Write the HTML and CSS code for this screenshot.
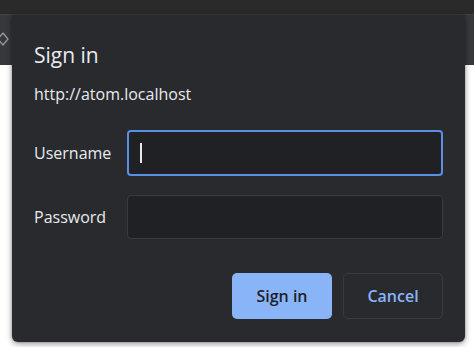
FILE: index.html
```html
<!DOCTYPE html>
<html>
<head>
<meta charset="utf-8">
<link rel="stylesheet" href="styles.css">
</head>
<body>
<div class="page">
  <div class="topbar"></div>
  <div class="toolbar">
    <svg class="chev" width="10" height="16" viewBox="0 0 10 16"><polyline points="3,2 8,8 3,14 -2,8 3,2" fill="none" stroke="#9a9b9e" stroke-width="1.3"/></svg>
  </div>
  <div class="content"></div>

  <div class="dialog">
    <h1 class="title">Sign in</h1>
    <div class="origin">http://atom.localhost</div>
    <div class="form">
      <label class="label">Username</label>
      <div class="field focused"><span class="caret"></span></div>
      <label class="label">Password</label>
      <div class="field"></div>
    </div>
    <div class="actions">
      <button class="btn primary">Sign in</button>
      <button class="btn secondary">Cancel</button>
    </div>
  </div>
</div>
</body>
</html>
```
FILE: styles.css
```css
html, body {
  margin: 0;
  padding: 0;
  background: #ffffff;
}
body {
  width: 474px;
  height: 347px;
  overflow: hidden;
  font-family: "Open Sans", "Noto Sans", sans-serif;
}
.page {
  position: relative;
  width: 474px;
  height: 347px;
}
.topbar {
  height: 14px;
  background: #2a2a2b;
  border-bottom: 1px solid #414144;
}
.toolbar {
  height: 50px;
  background: #37383b;
  display: flex;
  align-items: flex-start;
}
.chev {
  margin-top: 16px;
  margin-left: 0;
}
.content {
  height: 282px;
  background: #ffffff;
}
.dialog {
  position: absolute;
  left: 12px;
  top: 15px;
  width: 453px;
  height: 327px;
  box-sizing: border-box;
  background: #292a2d;
  border-radius: 0 0 6px 6px;
  box-shadow: 0 2px 6px rgba(0, 0, 0, 0.4), 0 0 2px rgba(0, 0, 0, 0.3);
  padding: 0 22px 23px;
  display: flex;
  flex-direction: column;
  color: #e8eaed;
}
.title {
  margin: 25px 0 0;
  font-size: 21px;
  font-weight: 400;
  line-height: 30px;
}
.origin {
  margin-top: 13px;
  font-size: 16px;
  line-height: 22px;
}
.form {
  margin-top: 25px;
  display: grid;
  grid-template-columns: 93px 1fr;
  row-gap: 19px;
  align-items: center;
}
.label {
  font-size: 16px;
  line-height: 22px;
}
.field {
  height: 44px;
  box-sizing: border-box;
  background: #202124;
  border: 1px solid #3a3b3f;
  border-radius: 4px;
  display: flex;
  align-items: center;
  padding-left: 11px;
}
.field.focused {
  border: 2px solid #5b8fe6;
  border-radius: 4px;
  height: 46px;
}
.caret {
  width: 1.5px;
  height: 20px;
  background: #e8eaed;
}
.actions {
  margin-top: auto;
  display: flex;
  justify-content: flex-end;
  gap: 11px;
}
.btn {
  width: 100px;
  height: 46px;
  border-radius: 5px;
  font-family: "Open Sans", "Noto Sans", sans-serif;
  font-size: 16px;
  font-weight: 600;
  cursor: pointer;
}
.primary {
  background: #8ab4f8;
  color: #202124;
  border: none;
}
.secondary {
  background: transparent;
  color: #8ab4f8;
  border: 1px solid #3a3b3f;
}
```
